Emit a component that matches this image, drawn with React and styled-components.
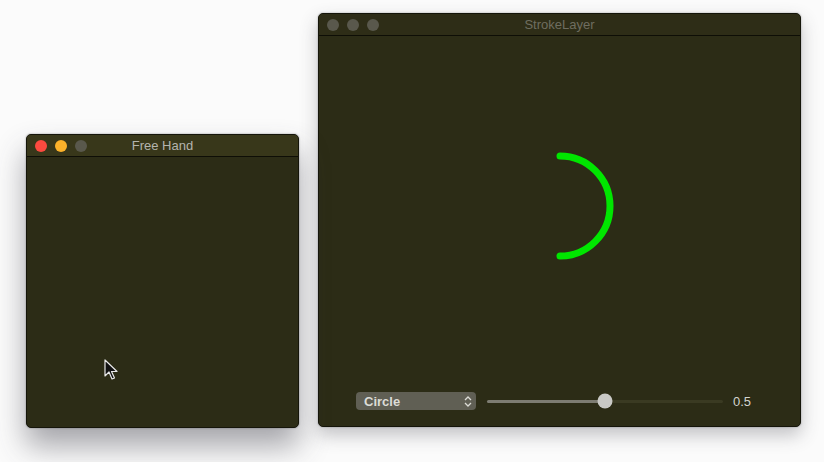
import React from "react";
import styled, { createGlobalStyle } from "styled-components";

const Global = createGlobalStyle`
  html, body {
    margin: 0;
    padding: 0;
    background: #fbfbfb;
    font-family: "Liberation Sans", Arial, sans-serif;
  }
`;

const Desktop = styled.div`
  position: relative;
  width: 824px;
  height: 462px;
  overflow: hidden;
  background: #fbfbfb;
`;

const Window = styled.div`
  position: absolute;
  left: ${(p) => p.x}px;
  top: ${(p) => p.y}px;
  width: ${(p) => p.w}px;
  height: ${(p) => p.h}px;
  display: flex;
  flex-direction: column;
  background: #2c2c16;
  border-radius: 5px;
  border: 1px solid #15150a;
  box-sizing: border-box;
  overflow: hidden;
  box-shadow: ${(p) =>
    p.active
      ? "0 18px 30px rgba(60, 60, 70, 0.45), 0 0 2px rgba(0,0,0,0.4)"
      : "0 8px 18px rgba(60, 60, 70, 0.3), 0 0 2px rgba(0,0,0,0.35)"};
`;

const TitleBar = styled.div`
  position: relative;
  height: 21px;
  flex: none;
  display: flex;
  align-items: center;
  gap: 8px;
  padding: 0 8px;
  background: ${(p) => (p.active ? "#38371a" : "#2e2d17")};
  border-bottom: 1px solid #0e0e06;
`;

const Light = styled.span`
  width: 12px;
  height: 12px;
  border-radius: 50%;
  background: ${(p) => p.color};
`;

const Title = styled.div`
  position: absolute;
  left: 0;
  right: 0;
  text-align: center;
  font-size: 13px;
  color: ${(p) => (p.active ? "#b4b4ae" : "#6e6d60")};
  pointer-events: none;
`;

const Body = styled.div`
  flex: 1;
  position: relative;
  display: flex;
  flex-direction: column;
  min-height: 0;
`;

const Canvas = styled.div`
  flex: 1;
  min-height: 0;
  display: flex;
  align-items: center;
  justify-content: center;
  padding-bottom: 16px;
`;

const Controls = styled.div`
  flex: none;
  display: flex;
  align-items: center;
  padding: 0 49px 15px 37px;
  height: 20px;
`;

const Popup = styled.div`
  width: 120px;
  height: 18px;
  box-sizing: border-box;
  border-radius: 4px;
  background: #605f54;
  display: flex;
  align-items: center;
  justify-content: space-between;
  padding: 0 4px 0 8px;
  color: #dcdcd6;
  font-size: 13px;
  font-weight: bold;
`;

const Track = styled.div`
  position: relative;
  margin-left: 11px;
  width: 236px;
  height: 3px;
  border-radius: 2px;
  background: #3a3a22;
`;

const Fill = styled.div`
  height: 100%;
  border-radius: 2px;
  background: #7d7c72;
`;

const Knob = styled.div`
  position: absolute;
  top: 50%;
  width: 15px;
  height: 15px;
  border-radius: 50%;
  background: #c9c9c5;
  transform: translate(-50%, -50%);
`;

const Value = styled.div`
  margin-left: 10px;
  font-size: 13px;
  color: #d4d4ce;
`;

const Cursor = styled.svg`
  position: absolute;
  left: 77px;
  top: 202px;
`;

export default function App() {
  const value = 0.5;
  return (
    <Desktop>
      <Global />
      <Window x={318} y={13} w={483} h={414}>
        <TitleBar>
          <Light color="#59584c" />
          <Light color="#59584c" />
          <Light color="#59584c" />
          <Title>StrokeLayer</Title>
        </TitleBar>
        <Body>
          <Canvas>
            <svg width="480" height="120" viewBox="0 0 480 120">
              <path
                d="M240 10 A50 50 0 0 1 240 110"
                fill="none"
                stroke="#00e600"
                strokeWidth="7"
                strokeLinecap="round"
              />
            </svg>
          </Canvas>
          <Controls>
            <Popup>
              Circle
              <svg width="8" height="13" viewBox="0 0 8 13">
                <path d="M1 5 L4 2 L7 5 M1 8 L4 11 L7 8" fill="none" stroke="#dcdcd6" strokeWidth="1.3" />
              </svg>
            </Popup>
            <Track>
              <Fill style={{ width: `${value * 100}%` }} />
              <Knob style={{ left: `${value * 100}%` }} />
            </Track>
            <Value>0.5</Value>
          </Controls>
        </Body>
      </Window>
      <Window x={26} y={134} w={273} h={294} active>
        <TitleBar active>
          <Light color="#fc4a3f" />
          <Light color="#fcb22a" />
          <Light color="#59584c" />
          <Title active>Free Hand</Title>
        </TitleBar>
        <Body>
          <Cursor width="14" height="22" viewBox="0 0 14 22">
            <path d="M1 1 L1 17 L5 13 L8 20 L10.5 19 L7.5 12.5 L13 12.5 Z" fill="#111" stroke="#e8e8e8" strokeWidth="1.2" strokeLinejoin="round" />
          </Cursor>
        </Body>
      </Window>
    </Desktop>
  );
}
